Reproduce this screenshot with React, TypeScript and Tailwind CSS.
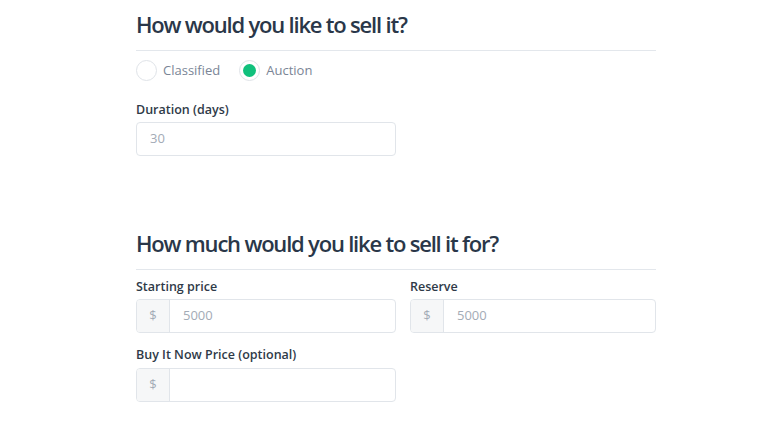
import React from "react";

function Radio({ label, checked }: { label: string; checked?: boolean }) {
  return (
    <label className="flex items-center gap-[6px]">
      <span className="flex h-[21px] w-[21px] items-center justify-center rounded-full border border-[#dfe3e8] bg-white">
        {checked && <span className="h-[13px] w-[13px] rounded-full bg-[#10c07c]" />}
      </span>
      <span className="text-[13px] text-[#7a8596]">{label}</span>
    </label>
  );
}

function PrefixInput({ value, width }: { value?: string; width: string }) {
  return (
    <div className={`flex h-[34px] overflow-hidden rounded-[4px] border border-[#e1e5ea] bg-white ${width}`}>
      <div className="flex w-[33px] items-center justify-center border-r border-[#e1e5ea] bg-[#f6f7f8] text-[13px] text-[#a3abb6]">
        $
      </div>
      <div className="flex flex-1 items-center pl-[13px] text-[13px] text-[#a3abb6]">{value}</div>
    </div>
  );
}

export default function App() {
  return (
    <div
      className="h-[421px] w-[768px] bg-white text-[#2a3442]"
      style={{ fontFamily: '"Open Sans", sans-serif' }}
    >
      <div className="ml-[136px] w-[520px] pt-[8px]">
        <h2 className="text-[22px] font-semibold leading-[32px] tracking-[-1.2px] text-[#2a3749]">
          How would you like to sell it?
        </h2>
        <div className="mt-[10px] h-px bg-[#e3e7ec]" />
        <div className="mt-[9px] flex items-center gap-[19px]">
          <Radio label="Classified" />
          <Radio label="Auction" checked />
        </div>
        <div className="mt-[20px] text-[12.5px] font-semibold leading-[18px] text-[#2f3a48]">
          Duration (days)
        </div>
        <div className="mt-[3px] flex h-[34px] w-[260px] items-center rounded-[4px] border border-[#e1e5ea] pl-[13px] text-[13px] text-[#a3abb6]">
          30
        </div>

        <h2 className="mt-[71px] text-[22px] font-semibold leading-[32px] tracking-[-1.2px] text-[#2a3749]">
          How much would you like to sell it for?
        </h2>
        <div className="mt-[10px] h-px bg-[#e3e7ec]" />
        <div className="mt-[8px] flex gap-[14px]">
          <div className="flex flex-col">
            <div className="text-[12.5px] font-semibold leading-[18px] text-[#2f3a48]">Starting price</div>
            <div className="mt-[3px]">
              <PrefixInput value="5000" width="w-[260px]" />
            </div>
          </div>
          <div className="flex flex-col">
            <div className="text-[12.5px] font-semibold leading-[18px] text-[#2f3a48]">Reserve</div>
            <div className="mt-[3px]">
              <PrefixInput value="5000" width="w-[246px]" />
            </div>
          </div>
        </div>
        <div className="mt-[13px] text-[12.5px] font-semibold leading-[18px] text-[#2f3a48]">
          Buy It Now Price (optional)
        </div>
        <div className="mt-[4px]">
          <PrefixInput width="w-[260px]" />
        </div>
      </div>
    </div>
  );
}
